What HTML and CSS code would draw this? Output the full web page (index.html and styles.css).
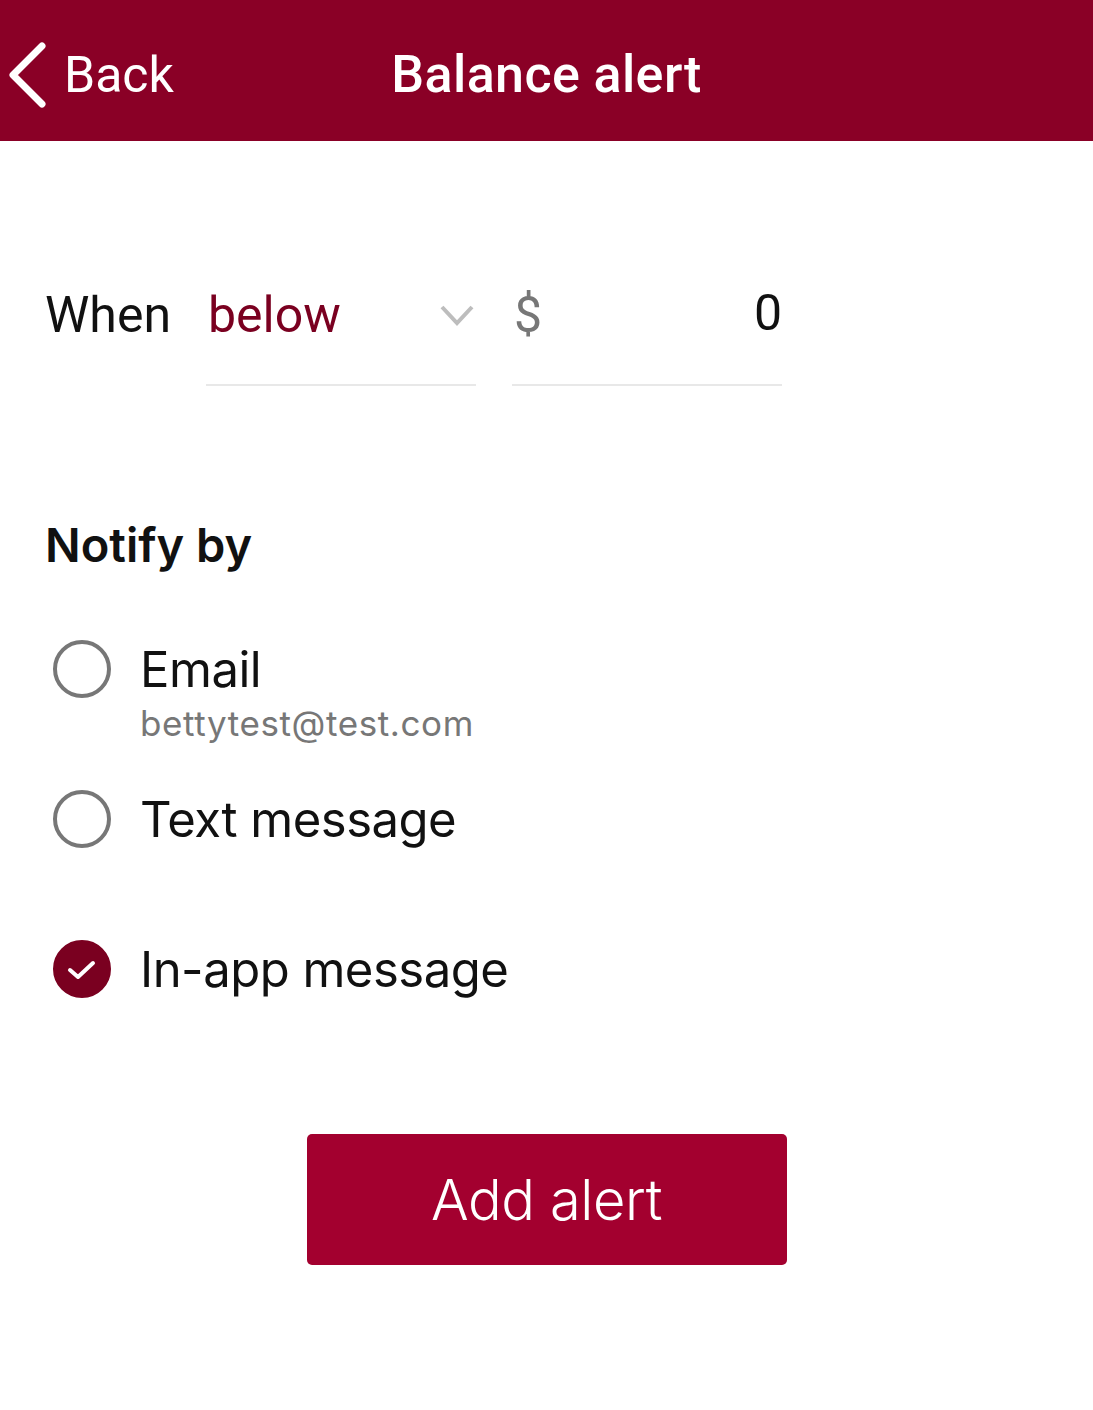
FILE: index.html
```html
<!DOCTYPE html>
<html lang="en">
<head>
    <meta charset="UTF-8">
    <meta name="viewport" content="width=device-width, initial-scale=1.0">
    <title>Balance alert</title>
    <link rel="stylesheet" href="styles.css">
</head>
<body>
    <div class="header">
        <div class="back">
            <svg class="chevron" width="40" height="66" viewBox="0 0 40 66">
                <path d="M34 4 L5 33 L34 62" fill="none" stroke="#fff" stroke-width="7" stroke-linecap="round" stroke-linejoin="round"/>
            </svg>
            <span>Back</span>
        </div>
        <div class="title">Balance alert</div>
        <div></div>
    </div>

    <div class="content">
        <div class="when">
            <span class="label">When</span>
            <div class="field select">
                <span class="red">below</span>
                <svg width="34" height="22" viewBox="0 0 34 22">
                    <path d="M2 3 L17 19 L32 3" fill="none" stroke="#bdbdbd" stroke-width="4"/>
                </svg>
            </div>
            <div class="field amount">
                <span class="dollar">$</span>
                <span>0</span>
            </div>
        </div>

        <h2>Notify by</h2>

        <div class="option">
            <span class="radio"></span>
            <div class="text">
                <div class="name">Email</div>
                <div class="sub">bettytest@test.com</div>
            </div>
        </div>
        <div class="option">
            <span class="radio"></span>
            <div class="text">
                <div class="name">Text message</div>
            </div>
        </div>
        <div class="option">
            <span class="radio checked">
                <svg width="30" height="30" viewBox="0 0 30 30">
                    <path d="M3 16 L11 23 L26 9" fill="none" stroke="#fff" stroke-width="4" stroke-linecap="round" stroke-linejoin="round"/>
                </svg>
            </span>
            <div class="text">
                <div class="name">In-app message</div>
            </div>
        </div>

        <div class="actions">
            <button>Add alert</button>
        </div>
    </div>
</body>
</html>
```

FILE: styles.css
```css
html, body {
    margin: 0;
    padding: 0;
    background: #fff;
}

.header {
    height: 141px;
    background: #8a0026;
    color: #fff;
    display: grid;
    grid-template-columns: 1fr auto 1fr;
    align-items: center;
    font-family: Roboto, sans-serif;
    font-size: 50px;
}
.back {
    display: flex;
    align-items: center;
    gap: 16px;
    padding-left: 8px;
    padding-top: 8px;
}
.back svg {
    margin-top: 0;
}
.back span {
    font-weight: 400;
}
.title {
    font-weight: 500;
    font-size: 52px;
    letter-spacing: 0.4px;
    padding-top: 8px;
}

.content {
    padding: 0 45px;
}

.when {
    display: flex;
    align-items: baseline;
    margin-top: 145px;
    font-family: Roboto, sans-serif;
    font-size: 50px;
    color: #111;
}
.label {
    width: 161px;
}
.field {
    width: 270px;
    border-bottom: 2px solid #e8e8e8;
    display: flex;
    align-items: baseline;
    justify-content: space-between;
    padding-bottom: 40px;
}
.select {
    margin-right: 36px;
}
.red {
    color: #7a0020;
    padding-left: 2px;
}
.select svg {
    margin-right: 2px;
    align-self: center;
    margin-top: 0;
}
.dollar {
    color: #777;
    padding-left: 2px;
}
.amount span:last-child {
    position: relative;
    top: -2px;
}

h2 {
    margin: 130px 0 60px;
    font-family: Inter, sans-serif;
    font-weight: 600;
    font-size: 47px;
    color: #111;
}

.option {
    display: flex;
    align-items: flex-start;
    gap: 29px;
    height: 150px;
    font-family: Inter, sans-serif;
}
.radio {
    flex: none;
    box-sizing: border-box;
    width: 58px;
    height: 58px;
    margin: 7px 0 0 8px;
    border-radius: 50%;
    border: 4px solid #777;
    display: flex;
    align-items: center;
    justify-content: center;
}
.radio.checked {
    background: #7a0020;
    border-color: #7a0020;
}
.text {
    padding-top: 9px;
}
.name {
    font-size: 49px;
    line-height: 56px;
    letter-spacing: -0.5px;
    color: #111;
}
.sub {
    font-size: 35px;
    line-height: 50px;
    color: #777;
    letter-spacing: 0.6px;
}

.actions {
    display: flex;
    justify-content: center;
    margin-top: 51px;
}
button {
    width: 480px;
    height: 131px;
    border: none;
    border-radius: 5px;
    background: #a3002f;
    color: #fff;
    font-family: Inter, sans-serif;
    font-weight: 300;
    font-size: 56px;
    letter-spacing: -0.4px;
}
```
